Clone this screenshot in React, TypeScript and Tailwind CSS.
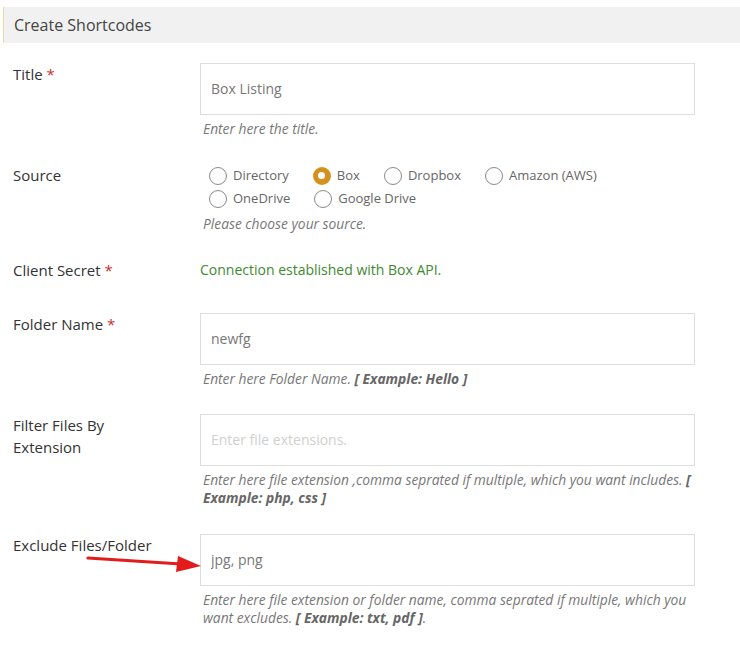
import React from "react";

const Required = () => <span className="text-[#c9302c]"> *</span>;

const Help = ({ children }: { children: React.ReactNode }) => (
  <p className="mt-[5px] pl-[3px] text-[13.8px] leading-[18px] italic text-[#777]">{children}</p>
);

const TextInput = ({ value, placeholder }: { value?: string; placeholder?: string }) => (
  <input
    readOnly
    defaultValue={value}
    placeholder={placeholder}
    className="block h-[52px] w-[495px] border border-[#dedede] bg-white px-[10px] pb-[2px] text-[14px] text-[#777] outline-none placeholder:text-[#d0d0d0]"
  />
);

const Radio = ({ label, checked }: { label: string; checked?: boolean }) => (
  <label className="mr-[24px] flex items-center gap-[6px] text-[13px] text-[#666]">
    {checked ? (
      <span className="flex h-[18px] w-[18px] items-center justify-center rounded-full bg-[#d4921c]">
        <span className="h-[7px] w-[7px] rounded-full bg-white" />
      </span>
    ) : (
      <span className="h-[18px] w-[18px] rounded-full border border-[#8a8a8a] bg-white" />
    )}
    {label}
  </label>
);

const Row = ({
  label,
  children,
  className = "",
}: {
  label: React.ReactNode;
  children: React.ReactNode;
  className?: string;
}) => (
  <div className={`relative flex ${className}`}>
    <div className="w-[200px] shrink-0 pl-[13px]">
      <div className="w-[140px] text-[15px] leading-[22px] text-[#333]">{label}</div>
    </div>
    <div className="w-[495px]">{children}</div>
  </div>
);

export default function App() {
  return (
    <div className="min-h-[649px] bg-white pt-[7px] font-['Open_Sans',sans-serif]">
      <div className="ml-[3px] flex h-[36px] items-center border-l border-[#e6dd9c] bg-[#f1f1f1] pl-[10px] text-[16px] text-[#444]">
        Create Shortcodes
      </div>

      <Row label={<>Title<Required /></>} className="mt-[20px]">
        <TextInput value="Box Listing" />
        <Help>Enter here the title.</Help>
      </Row>

      <Row label="Source" className="mt-[26px]">
        <div className="flex flex-wrap pl-[9px] leading-[23px]">
          <Radio label="Directory" />
          <Radio label="Box" checked />
          <Radio label="Dropbox" />
          <Radio label="Amazon (AWS)" />
        </div>
        <div className="flex flex-wrap pl-[9px] leading-[23px]">
          <Radio label="OneDrive" />
          <Radio label="Google Drive" />
        </div>
        <Help>Please choose your source.</Help>
      </Row>

      <Row label={<>Client Secret<Required /></>} className="mt-[26px]">
        <p className="text-[14px] leading-[22px] text-[#3e8a2f]">Connection established with Box API.</p>
      </Row>

      <Row label={<>Folder Name<Required /></>} className="mt-[32px]">
        <TextInput value="newfg" />
        <Help>
          Enter here Folder Name. <b className="font-bold text-[#666]">[ Example: Hello ]</b>
        </Help>
      </Row>

      <Row label="Filter Files By Extension" className="mt-[26px]">
        <TextInput placeholder="Enter file extensions." />
        <Help>
          Enter here file extension ,comma seprated if multiple, which you want includes.{" "}
          <b className="font-bold text-[#666]">[ Example: php, css ]</b>
        </Help>
      </Row>

      <Row label="Exclude Files/Folder" className="mt-[27px]">
        <TextInput value="jpg, png" />
        <Help>
          Enter here file extension or folder name, comma seprated if multiple, which you want excludes.{" "}
          <b className="font-bold text-[#666]">[ Example: txt, pdf ]</b>.
        </Help>
        <svg className="absolute left-[85px] top-[13px]" width="120" height="26" viewBox="0 0 120 26">
          <line x1="3" y1="11" x2="96" y2="17" stroke="#e21b1b" strokeWidth="3.2" strokeLinecap="round" />
          <polygon points="93,9 116,19 91,25" fill="#e21b1b" />
        </svg>
      </Row>
    </div>
  );
}
